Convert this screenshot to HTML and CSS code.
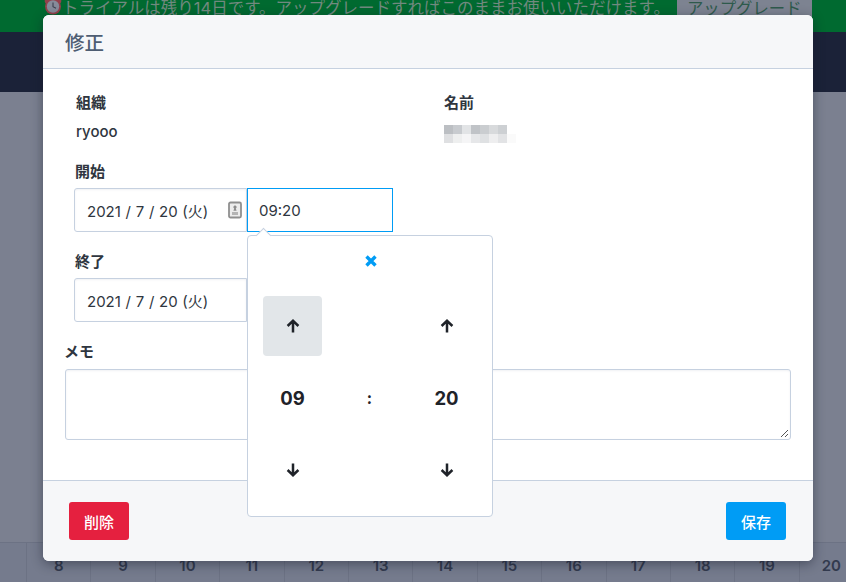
FILE: index.html
```html
<!DOCTYPE html>
<html lang="ja">
<head>
<meta charset="utf-8">
<title>修正</title>
<link rel="stylesheet" href="styles.css">
</head>
<body>
<div class="page">
  <div class="banner">
    <svg class="clock" viewBox="0 0 18 18" width="18" height="18">
      <circle cx="3.5" cy="3" r="2.8" fill="#94404c"/><circle cx="14.5" cy="3" r="2.8" fill="#94404c"/>
      <circle cx="9" cy="8.5" r="8" fill="#94404c"/><circle cx="9" cy="8.5" r="6.2" fill="#868b9a"/>
      <path d="M9 4.5v4.2l3 1.6" fill="none" stroke="#3c4150" stroke-width="1.1"/>
    </svg>
    <span class="banner-text">トライアルは残り14日です。アップグレードすればこのままお使いいただけます。</span>
    <span class="banner-btn">アップグレード</span>
  </div>
  <div class="nav"></div>
  <div class="main">
    <div class="days">
      <span>8</span><span>9</span><span>10</span><span>11</span><span>12</span><span>13</span><span>14</span><span>15</span><span>16</span><span>17</span><span>18</span><span>19</span><span>20</span>
    </div>
  </div>
</div>

<div class="modal">
  <div class="modal-head">修正</div>
  <div class="modal-body">
    <div class="info">
      <div class="info-col">
        <div class="label">組織</div>
        <div class="value">ryooo</div>
      </div>
      <div class="info-col">
        <div class="label">名前</div>
        <svg class="blur" viewBox="0 0 72 18" width="72" height="18">
          <rect x="0" y="0" width="9" height="9" fill="#bcbfc3"/><rect x="9" y="0" width="9" height="9" fill="#c8cbcf"/><rect x="18" y="0" width="9" height="9" fill="#e2e4e6"/><rect x="27" y="0" width="9" height="9" fill="#c0c3c7"/><rect x="36" y="0" width="9" height="9" fill="#cacdd0"/><rect x="45" y="0" width="9" height="9" fill="#d8dadc"/><rect x="54" y="0" width="9" height="9" fill="#cdd0d3"/>
          <rect x="0" y="9" width="9" height="9" fill="#dfe0e2"/><rect x="9" y="9" width="9" height="9" fill="#eeefef"/><rect x="18" y="9" width="9" height="9" fill="#f5f5f6"/><rect x="27" y="9" width="9" height="9" fill="#e6e7e9"/><rect x="36" y="9" width="9" height="9" fill="#dfe1e3"/><rect x="45" y="9" width="9" height="9" fill="#eeeeef"/><rect x="54" y="9" width="9" height="9" fill="#e2e3e5"/><rect x="63" y="9" width="9" height="9" fill="#fafafa"/>
        </svg>
      </div>
    </div>

    <div class="field">
      <div class="label">開始</div>
      <div class="inputs">
        <div class="date">2021 / 7 / 20 (火)
          <svg class="cal" viewBox="0 0 14 18" width="14" height="18">
            <rect x="1" y="1.5" width="12" height="15" rx="1.5" fill="#ececec" stroke="#8f8f8f" stroke-width="1.8"/>
            <path d="M7 4.5a1.6 1.6 0 0 1 .8 3l.8 2.2H5.4l.8-2.2a1.6 1.6 0 0 1 .8-3z" fill="#8c8c8c"/>
            <rect x="4" y="11" width="6" height="3" fill="#b4b4b4"/>
          </svg>
        </div>
        <div class="time">09:20</div>
      </div>
    </div>

    <div class="field field-end">
      <div class="label">終了</div>
      <div class="inputs">
        <div class="date">2021 / 7 / 20 (火)</div>
      </div>
    </div>

    <div class="memo">
      <div class="label">メモ</div>
      <div class="textarea">
        <svg class="grip" viewBox="0 0 9 9" width="9" height="9"><path d="M1 8 8 1M5 8l3-3" stroke="#555" stroke-width="1" fill="none"/></svg>
      </div>
    </div>
  </div>
  <div class="modal-foot">
    <button class="btn btn-del">削除</button>
    <button class="btn btn-save">保存</button>
  </div>
</div>

<div class="picker">
  <div class="picker-close">
    <svg viewBox="0 0 14 14" width="14" height="14"><path d="M2.5 2.5l9 9M11.5 2.5l-9 9" stroke="#009cf5" stroke-width="3.4" fill="none"/></svg>
  </div>
  <div class="picker-grid">
    <div class="cell cell-hover"><svg viewBox="0 0 16 16" width="16" height="16"><path d="M8 14.5V2.8M2.6 8 8 2.8 13.4 8" class="arrow"/></svg></div>
    <div class="cell"></div>
    <div class="cell"><svg viewBox="0 0 16 16" width="16" height="16"><path d="M8 14.5V2.8M2.6 8 8 2.8 13.4 8" class="arrow"/></svg></div>
    <div class="cell num">09</div>
    <div class="cell colon">:</div>
    <div class="cell num">20</div>
    <div class="cell"><svg viewBox="0 0 16 16" width="16" height="16"><path d="M8 1.5v11.7M2.6 8 8 13.2 13.4 8" class="arrow"/></svg></div>
    <div class="cell"></div>
    <div class="cell"><svg viewBox="0 0 16 16" width="16" height="16"><path d="M8 1.5v11.7M2.6 8 8 13.2 13.4 8" class="arrow"/></svg></div>
  </div>
</div>
</body>
</html>
```

FILE: styles.css
```css
* { box-sizing: border-box; }
html, body { margin: 0; height: 100%; overflow: hidden; }
body {
  font-family: Inter, "Noto Sans CJK JP", sans-serif;
  font-size: 15px;
  color: #2f3640;
  background: #7b8090;
}
.page { height: 582px; display: flex; flex-direction: column; }
.banner {
  height: 32px;
  flex: none;
  background: #006a30;
  display: flex;
  align-items: flex-start;
  padding-left: 44px;
  font-size: 16.5px;
  line-height: 16px;
  color: #71897f;
  overflow: hidden;
}
.clock { flex: none; margin-top: -2px; }
.banner-text { white-space: nowrap; }
.banner-btn {
  margin-left: 7px;
  padding: 0 10px;
  height: 32px;
  background: #7d8391;
  color: #2e5a4c;
  font-size: 16.4px;
  white-space: nowrap;
}
.nav { height: 60px; flex: none; background: #1b2238; }
.main { flex: 1; display: flex; flex-direction: column; justify-content: flex-end; }
.days {
  height: 40px;
  display: grid;
  grid-template-columns: repeat(13, 64.4px);
  padding-left: 26px;
  border-top: 1px solid #6c7284;
  background: #757b8d;
  color: #323a4e;
  font-weight: 600;
  font-size: 15px;
  overflow: hidden;
}
.days span {
  border-left: 1px solid #6c7284;
  text-align: center;
  padding-top: 13px;
}

.modal {
  position: absolute;
  left: 43px;
  top: 15px;
  width: 770px;
  height: 546px;
  background: #fff;
  border-radius: 6px;
  box-shadow: 0 3px 12px rgba(20, 25, 40, .45);
  display: flex;
  flex-direction: column;
  overflow: hidden;
}
.modal-head {
  height: 54px;
  flex: none;
  padding: 0 22px;
  display: flex;
  align-items: center;
  background: #f6f7f9;
  border-bottom: 1px solid #c6d1e0;
  font-size: 19.5px;
  font-weight: 500;
  color: #4e5d72;
}
.modal-body { flex: 1; padding: 24px 22px 0; position: relative; }
.label { font-weight: 600; font-size: 15px; line-height: 20px; color: #2f3640; }
.info { display: flex; padding-left: 11px; height: 69px; }
.info-col { width: 368px; flex: none; }
.value { margin-top: 9px; line-height: 20px; font-weight: 500; }
.blur { display: block; margin-top: 12px; }
.field { padding-left: 9px; }
.field .label { margin-left: 1px; margin-bottom: 6px; }
.field-end { margin-top: 20px; }
.inputs { display: flex; height: 44px; }
.date {
  width: 173px;
  height: 44px;
  padding-left: 12px;
  display: flex;
  align-items: center;
  justify-content: space-between;
  border: 1px solid #c6d1e0;
  border-radius: 3px 0 0 3px;
  font-weight: 400;
  word-spacing: 0.5px;
  padding-right: 4px;
  white-space: nowrap;
  box-shadow: inset 0 1px 2px rgba(60, 80, 110, .08);
}
.cal { flex: none; }
.time {
  width: 146px;
  height: 44px;
  padding-left: 11px;
  display: flex;
  align-items: center;
  border: 1px solid #009cf5;
  font-weight: 400;
}
.memo { margin-top: 20px; }
.memo .label { margin-bottom: 7px; margin-left: -1px; }
.textarea {
  width: 726px;
  height: 71px;
  border: 1px solid #c6d1e0;
  border-radius: 3px;
  position: relative;
  box-shadow: inset 0 1px 2px rgba(60, 80, 110, .08);
}
.grip { position: absolute; right: 1px; bottom: 1px; }
.modal-foot {
  height: 81px;
  flex: none;
  padding: 21px 27px 21px 26px;
  display: flex;
  justify-content: space-between;
  background: #f6f7f9;
  border-top: 1px solid #c6d1e0;
}
.btn {
  width: 60px;
  height: 38px;
  border: 0;
  border-radius: 3px;
  font: 500 15px Inter, "Noto Sans CJK JP", sans-serif;
  color: #fff;
}
.btn-del { background: #e5203f; }
.btn-save { background: #009cf5; }

.picker {
  position: absolute;
  left: 247px;
  top: 235px;
  width: 246px;
  height: 282px;
  padding: 15px 16px 0 15px;
  background: #fff;
  border: 1px solid #c6d1e0;
  border-radius: 4px;
}
.picker::before {
  content: "";
  position: absolute;
  left: 10px;
  top: -6px;
  width: 10px;
  height: 10px;
  background: #fff;
  border-left: 1px solid #c6d1e0;
  border-top: 1px solid #c6d1e0;
  transform: rotate(45deg);
}
.picker-close { height: 20px; margin-bottom: 25px; display: flex; justify-content: center; align-items: center; }
.picker-close svg { display: block; margin-left: 3px; }
.picker-grid {
  display: grid;
  grid-template-columns: 59px 1fr 59px;
  grid-auto-rows: 60px;
  row-gap: 12px;
}
.cell { display: flex; align-items: center; justify-content: center; color: #1f2329; }
.cell-hover { background: #e2e6e9; border-radius: 4px; }
.arrow { fill: none; stroke: #1f2329; stroke-width: 2.5; }
.num { font-size: 18.5px; font-weight: 700; }
.colon { font-size: 16px; font-weight: 700; }
```
